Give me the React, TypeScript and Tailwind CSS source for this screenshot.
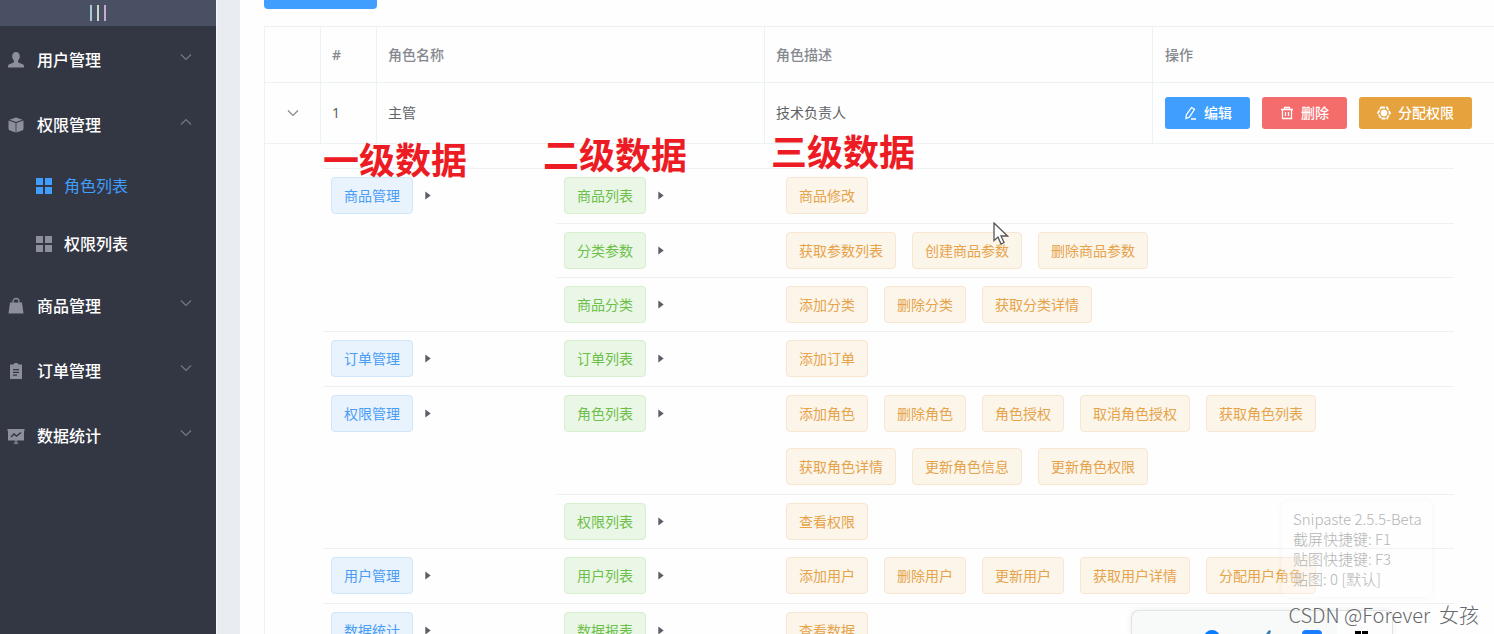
import { ReactNode } from "react";
import clsx from "clsx";

type RightGroup = {
  name: string;
  children: Array<{ name: string; rights: string[] }>;
};

type MenuItem = {
  title: string;
  icon: ReactNode;
  open?: boolean;
  children?: Array<{ title: string; active: boolean }>;
};

const rightGroups: RightGroup[] = [
  {
    name: "商品管理",
    children: [
      { name: "商品列表", rights: ["商品修改"] },
      { name: "分类参数", rights: ["获取参数列表", "创建商品参数", "删除商品参数"] },
      { name: "商品分类", rights: ["添加分类", "删除分类", "获取分类详情"] },
    ],
  },
  { name: "订单管理", children: [{ name: "订单列表", rights: ["添加订单"] }] },
  {
    name: "权限管理",
    children: [
      {
        name: "角色列表",
        rights: [
          "添加角色",
          "删除角色",
          "角色授权",
          "取消角色授权",
          "获取角色列表",
          "获取角色详情",
          "更新角色信息",
          "更新角色权限",
        ],
      },
      { name: "权限列表", rights: ["查看权限"] },
    ],
  },
  {
    name: "用户管理",
    children: [
      {
        name: "用户列表",
        rights: ["添加用户", "删除用户", "更新用户", "获取用户详情", "分配用户角色"],
      },
    ],
  },
  { name: "数据统计", children: [{ name: "数据报表", rights: ["查看数据"] }] },
];

const menuItems: MenuItem[] = [
  {
    title: "用户管理",
    icon: (
      <path d="M9 1c2.400 0 3.800 1.700 3.800 4.200 0 1.800-.8 3.300-1.800 4.200v1.400c0 .5.300.8.800 1l4 1.500c.8.300 1.200.9 1.200 1.700v1.500H1V15c0-.8.400-1.400 1.200-1.700l4-1.500c.5-.2.8-.5.8-1V9.400C6 8.500 5.200 7 5.200 5.200 5.200 2.700 6.600 1 9 1z" />
    ),
  },
  {
    title: "权限管理",
    icon: (
      <>
        <path d="M9 1.500 15.500 3.700 9 6 2.500 3.700z" />
        <path d="M1.500 4.600 8.600 7v9.600L3 14.600c-1-.4-1.500-1-1.500-2z" />
        <path d="M16.500 4.600 9.400 7v9.600l5.600-2c1-.4 1.500-1 1.500-2z" />
      </>
    ),
    open: true,
    children: [
      { title: "角色列表", active: true },
      { title: "权限列表", active: false },
    ],
  },
  {
    title: "商品管理",
    icon: (
      <>
        <path d="M3 5.500h12l1.500 11h-15z" />
        <path d="M6 7.500V4.500a3 3 0 0 1 6 0v3" fill="none" stroke="currentColor" strokeWidth="1.300" />
      </>
    ),
  },
  {
    title: "订单管理",
    icon: (
      <path
        fillRule="evenodd"
        d="M6.500 2.500 7.500 1h3l1 1.500H15V17H3V2.500zM6 7v1.200h6V7zm0 2.800V11h6V9.800zm0 2.700v1.200h4v-1.200z"
      />
    ),
  },
  {
    title: "数据统计",
    icon: (
      <>
        <path d="M0.500 2h17v2H17v9.500H1V4H.5z" />
        <path d="M8.300 13h1.400v2.200L12 16.800H6l2.300-1.600z" />
        <path d="m4 10 3-3 2.500 2L14 5.500" fill="none" stroke="#333744" strokeWidth="1.400" />
      </>
    ),
  },
];

const buttonClass =
  "flex h-8 items-center justify-center gap-[7px] rounded-[3px] px-[18px] text-sm font-medium text-white";

function Chevron({ up = false, className }: { up?: boolean; className: string }) {
  return (
    <svg viewBox="0 0 12 12" className={clsx("size-3", className)} fill="none" stroke="currentColor">
      <path d={up ? "M1 8.500 6 3.500l5 5" : "M1 3.500l5 5 5-5"} strokeWidth="1.200" />
    </svg>
  );
}

function GridIcon() {
  return (
    <svg viewBox="0 0 18 18" className="size-[18px]" fill="currentColor">
      <path d="M1 1h7v7H1zM10 1h7v7h-7zM1 10h7v7H1zM10 10h7v7h-7z" />
    </svg>
  );
}

function Caret() {
  return (
    <svg viewBox="0 0 6 10" className="ml-1 h-[9px] w-[6px]" fill="#5b5e66">
      <path d="M0 0.500 6 5 0 9.500z" />
    </svg>
  );
}

function Tag({ type, children }: { type: "primary" | "success" | "warning"; children: string }) {
  return (
    <span
      className={clsx(
        "m-2 inline-flex h-[37px] items-center rounded border px-3 text-sm whitespace-nowrap",
        type === "primary" && "border-[#d0e6fa] bg-[#e8f3fd] text-[#4a9cf5]",
        type === "success" && "border-[#d6efcc] bg-[#ebf7e6] text-[#6cc04a]",
        type === "warning" && "border-[#f8e6d0] bg-[#fcf5ea] text-[#e6a34a]",
      )}
    >
      {children}
    </span>
  );
}

function Sidebar() {
  return (
    <aside className="w-[217px] flex-none border-r border-[#f6f7f9] bg-[#333744] text-white">
      <button
        type="button"
        aria-label="折叠菜单"
        className="flex h-[26px] w-full items-center justify-center gap-[5px] bg-[#4a5064] pr-5"
      >
        <span className="h-4 w-[2px] bg-[#a9c9d6]" />
        <span className="h-4 w-[2px] bg-[#c9d8c8]" />
        <span className="h-4 w-[2px] bg-[#c9a9cc]" />
      </button>
      <nav className="pt-px text-base font-medium">
        {menuItems.map((item) => (
          <div key={item.title}>
            <button type="button" className="flex h-[65px] w-full items-center pr-6 pl-[7px]">
              <svg viewBox="0 0 18 18" className="size-[18px] text-[#8d909a]" fill="currentColor">
                {item.icon}
              </svg>
              <span className="ml-3">{item.title}</span>
              <Chevron up={item.open} className="mb-[5px] ml-auto text-[#747884]" />
            </button>
            {item.children?.map((child) => (
              <a
                key={child.title}
                href="#"
                className={clsx(
                  "flex h-[58px] items-center gap-[11px] pl-[35px]",
                  child.active && "font-normal text-[#409eff]",
                )}
              >
                <span className={child.active ? "text-[#409eff]" : "text-[#8d909a]"}>
                  <GridIcon />
                </span>
                {child.title}
              </a>
            ))}
          </div>
        ))}
      </nav>
    </aside>
  );
}

function RightsTree() {
  return (
    <div className="mt-6 mr-[47px] ml-[58px] pb-6">
      {rightGroups.map((group) => (
        <div key={group.name} className="flex border-t border-[#ecf1f3]">
          <div className="flex w-[233px] flex-none items-center self-start">
            <Tag type="primary">{group.name}</Tag>
            <Caret />
          </div>
          <div className="flex-1">
            {group.children.map((child, index) => (
              <div
                key={child.name}
                className={clsx(
                  "flex",
                  index === 0 ? "pb-px" : "border-t border-[#ecf1f3]",
                )}
              >
                <div className="flex w-[222px] flex-none items-center self-start">
                  <Tag type="success">{child.name}</Tag>
                  <Caret />
                </div>
                <div className="flex flex-1 flex-wrap pr-4">
                  {child.rights.map((right) => (
                    <Tag key={right} type="warning">
                      {right}
                    </Tag>
                  ))}
                </div>
              </div>
            ))}
          </div>
        </div>
      ))}
    </div>
  );
}

function RoleTable() {
  const cell = "border border-[#ecf1f3] px-[11px] text-left";
  return (
    <table className="mt-[17px] w-[calc(100%+8px)] table-fixed border-collapse text-sm text-[#606266]">
      <colgroup>
        <col className="w-14" />
        <col className="w-14" />
        <col />
        <col />
        <col className="w-[349px]" />
      </colgroup>
      <thead>
        <tr className="h-14 text-[#85888e]">
          <th className={cell} />
          <th className={clsx(cell, "font-medium")}>#</th>
          <th className={clsx(cell, "font-medium")}>角色名称</th>
          <th className={clsx(cell, "font-medium")}>角色描述</th>
          <th className="border border-[#ecf1f3] px-3 text-left font-medium">操作</th>
        </tr>
      </thead>
      <tbody>
        <tr className="h-[61px]">
          <td className={cell}>
            <button type="button" aria-label="展开" className="flex w-full justify-center">
              <Chevron className="text-[#85888e]" />
            </button>
          </td>
          <td className={cell}>1</td>
          <td className={cell}>主管</td>
          <td className={cell}>技术负责人</td>
          <td className="border border-[#ecf1f3] px-3">
            <div className="flex gap-3">
              <button type="button" className={clsx(buttonClass, "bg-[#409eff]")}>
                <svg viewBox="1 1 14 14" className="size-[14px]" fill="none" stroke="currentColor" strokeWidth="1.300">
                  <path d="M9.500 2.500 12.500 4.300 7.500 12 4 13.500 4.300 10zM9 14h5" />
                </svg>
                编辑
              </button>
              <button type="button" className={clsx(buttonClass, "bg-[#f56c6c]")}>
                <svg viewBox="1 1 14 14" className="size-[14px]" fill="none" stroke="currentColor" strokeWidth="1.300">
                  <path d="M2 4.500h12M5.500 4.500v-2h5v2M3.500 4.500v9h9v-9M6.500 7v4M9.500 7v4" />
                </svg>
                删除
              </button>
              <button type="button" className={clsx(buttonClass, "bg-[#e6a23c]")}>
                <svg viewBox="1 1 14 14" className="size-[14px]" fill="none" stroke="currentColor">
                  <path d="M5 2.500h6L14 8l-3 5.500H5L2 8z" strokeWidth="1.800" strokeDasharray="4 1" />
                  <circle cx="8" cy="8" r="3" fill="currentColor" />
                </svg>
                分配权限
              </button>
            </div>
          </td>
        </tr>
        <tr>
          <td colSpan={5} className="border border-[#ecf1f3] p-0">
            <RightsTree />
          </td>
        </tr>
      </tbody>
    </table>
  );
}

// Screenshot helper hint, capture toolbar and watermark float over the page
function Overlays() {
  return (
    <>
      <p className="absolute top-[141px] left-[323px] text-4xl font-bold text-[#ed1c24]">一级数据</p>
      <p className="absolute top-[136px] left-[543px] text-4xl font-bold text-[#ed1c24]">二级数据</p>
      <p className="absolute top-[133px] left-[771px] text-4xl font-bold text-[#ed1c24]">三级数据</p>
      <svg
        viewBox="0 0 16 24"
        className="absolute top-[222px] left-[993px] h-6 w-4"
        fill="#fff"
        stroke="#555"
        strokeWidth="1.300"
      >
        <path d="M1 1v17.500l4-3.500 3 7 3-1.500-3-6.500h6.500z" />
      </svg>
      <div className="absolute right-[62px] bottom-[37px] w-[150px] rounded-md bg-white/25 px-[11px] py-2 font-['Noto_Sans_CJK_SC',sans-serif] text-[15px] leading-5 font-light text-[#b4b5b4] shadow-[0_0_6px_rgba(0,0,0,0.04)]">
        <p className="whitespace-nowrap">Snipaste 2.5.5-Beta</p>
        <p>截屏快捷键: F1</p>
        <p>贴图快捷键: F3</p>
        <p>贴图: 0 [默认]</p>
      </div>
      <div className="absolute right-[101px] bottom-0 h-6 w-[262px] overflow-hidden rounded-t-lg border border-b-0 border-[#e2e4e4] bg-[#f8f9f9] shadow-[0_0_6px_rgba(0,0,0,0.08)]">
        <svg viewBox="0 0 260 23" className="h-[23px] w-[260px]">
          <path d="M205 0h55v23h-55z" fill="#fdfdfd" />
          <circle cx="80" cy="27" r="8" fill="#0a7cff" />
          <path d="m134 23 3-4 2 1-1 3z" fill="#3f7fb0" />
          <rect x="170" y="19" width="20" height="12" rx="4" fill="#1a7dff" />
          <path d="M223 20h6v3h-6zM230 20h6v3h-6z" fill="#000" />
        </svg>
      </div>
      <p className="absolute right-[15px] bottom-[5px] font-['Noto_Sans_CJK_SC',sans-serif] text-xl leading-7 font-light whitespace-pre text-[#66686a]">
        CSDN @Forever  女孩
      </p>
    </>
  );
}

export default function App() {
  return (
    <div className="relative flex h-screen overflow-hidden bg-[#e9edf1] font-['Noto_Sans','Noto_Sans_CJK_SC',sans-serif]">
      <Sidebar />
      <main className="ml-[23px] min-w-0 flex-1 bg-[#fdfefd] pl-6">
        <button
          type="button"
          aria-label="添加角色"
          className="block h-[9px] w-[113px] rounded-b bg-[#409eff]"
        />
        <RoleTable />
      </main>
      <Overlays />
    </div>
  );
}
